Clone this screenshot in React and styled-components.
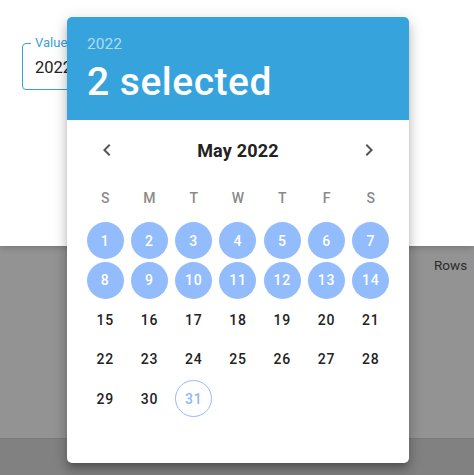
import React from "react";
import styled, { createGlobalStyle } from "styled-components";

const Global = createGlobalStyle`
  html, body { margin: 0; padding: 0; }
  body { font-family: Roboto, "Noto Sans", sans-serif; background: #fff; overflow: hidden; }
`;

const Page = styled.div`
  position: relative;
  width: 474px;
  height: 475px;
  display: flex;
  flex-direction: column;
  overflow: hidden;
`;

const TopArea = styled.div`
  height: 246px;
  background: #fff;
  padding: 43px 0 0 22px;
  box-sizing: border-box;
  position: relative;
  z-index: 1;
  box-shadow: 0 2px 6px rgba(0,0,0,0.18);
`;

const Field = styled.div`
  position: relative;
  width: 230px;
  height: 47px;
  border: 1.5px solid #3a9fd8;
  border-radius: 4px;
  box-sizing: border-box;
  display: flex;
  align-items: center;
  padding-left: 12px;
`;

const FieldLabel = styled.span`
  position: absolute;
  top: -9px;
  left: 8px;
  padding: 0 4px;
  background: #fff;
  font-size: 13px;
  color: #3a9fd8;
  line-height: 16px;
`;

const FieldValue = styled.span`
  font-size: 16.5px;
  color: #222;
  padding-top: 2px;
`;

const GrayBand = styled.div`
  height: 193px;
  background: #939393;
  display: flex;
  justify-content: flex-end;
  padding: 11px 0 0 0;
  box-sizing: border-box;
  border-bottom: 1px solid #7a7a7a;
`;

const RowsLabel = styled.span`
  font-size: 13.5px;
  color: #2c2c2c;
  width: 40px;
  white-space: nowrap;
`;

const BottomBand = styled.div`
  flex: 1;
  background: #818181;
`;

const Popover = styled.div`
  position: absolute;
  left: 67px;
  top: 17px;
  width: 342px;
  height: 446px;
  background: #fff;
  border-radius: 5px;
  overflow: hidden;
  z-index: 2;
  box-shadow: 0 5px 5px -3px rgba(0,0,0,0.2), 0 8px 10px 1px rgba(0,0,0,0.14), 0 3px 14px 2px rgba(0,0,0,0.12);
  display: flex;
  flex-direction: column;
`;

const Header = styled.div`
  height: 103px;
  background: #37a3dc;
  padding: 17px 20px 0 20px;
  box-sizing: border-box;
  display: flex;
  flex-direction: column;
`;

const Year = styled.div`
  font-size: 15.5px;
  line-height: 20px;
  color: rgba(255,255,255,0.62);
`;

const Selected = styled.div`
  font-size: 39px;
  line-height: 44px;
  color: #fff;
  font-weight: 500;
  margin-top: 6px;
  letter-spacing: 0.5px;
`;

const Body = styled.div`
  padding: 16px 16px 0 16px;
  display: flex;
  flex-direction: column;
`;

const MonthRow = styled.div`
  height: 28px;
  display: flex;
  align-items: center;
  justify-content: space-between;
  padding: 0 12px 0 12px;
`;

const NavButton = styled.span`
  display: flex;
  align-items: center;
  justify-content: center;
  width: 24px;
  height: 24px;
  color: #555;
`;

const MonthTitle = styled.span`
  font-size: 18px;
  font-weight: 700;
  color: #222;
  letter-spacing: 0.2px;
`;

const WeekRow = styled.div`
  display: grid;
  grid-template-columns: repeat(7, 1fr);
  margin-top: 24px;
  height: 20px;
  align-items: center;
`;

const WeekDay = styled.span`
  text-align: center;
  font-size: 14px;
  font-weight: 500;
  color: #8a8a8a;
`;

const DayGrid = styled.div`
  display: grid;
  grid-template-columns: repeat(7, 1fr);
  grid-auto-rows: 37px;
  row-gap: 2.5px;
  margin-top: 14px;
  justify-items: center;
`;

const Day = styled.span`
  width: 37px;
  height: 37px;
  box-sizing: border-box;
  border-radius: 50%;
  display: flex;
  align-items: center;
  justify-content: center;
  font-size: 14px;
  font-weight: 500;
  letter-spacing: 0.8px;
  color: ${p => (p.$selected ? "#fff" : p.$today ? "#8fb8f8" : "#222")};
  background: ${p => (p.$selected ? "#93bcfc" : "transparent")};
  border: ${p => (p.$today ? "1px solid #93bcfc" : "none")};
`;

const Chevron = ({ dir }) => (
  <svg width="26" height="26" viewBox="0 0 24 24" fill="currentColor">
    {dir === "left" ? (
      <path d="M15.41 7.41 14 6l-6 6 6 6 1.41-1.41L10.83 12z" />
    ) : (
      <path d="M10 6 8.59 7.41 13.17 12l-4.58 4.59L10 18l6-6z" />
    )}
  </svg>
);

export default function App() {
  const days = Array.from({ length: 31 }, (_, i) => i + 1);
  return (
    <>
      <Global />
      <Page>
        <TopArea>
          <Field>
            <FieldLabel>Value</FieldLabel>
            <FieldValue>2022</FieldValue>
          </Field>
        </TopArea>
        <GrayBand>
          <RowsLabel>Rows</RowsLabel>
        </GrayBand>
        <BottomBand />
        <Popover>
          <Header>
            <Year>2022</Year>
            <Selected>2 selected</Selected>
          </Header>
          <Body>
            <MonthRow>
              <NavButton><Chevron dir="left" /></NavButton>
              <MonthTitle>May 2022</MonthTitle>
              <NavButton><Chevron dir="right" /></NavButton>
            </MonthRow>
            <WeekRow>
              {["S", "M", "T", "W", "T", "F", "S"].map((d, i) => (
                <WeekDay key={i}>{d}</WeekDay>
              ))}
            </WeekRow>
            <DayGrid>
              {days.map(d => (
                <Day key={d} $selected={d <= 14} $today={d === 31}>{d}</Day>
              ))}
            </DayGrid>
          </Body>
        </Popover>
      </Page>
    </>
  );
}
